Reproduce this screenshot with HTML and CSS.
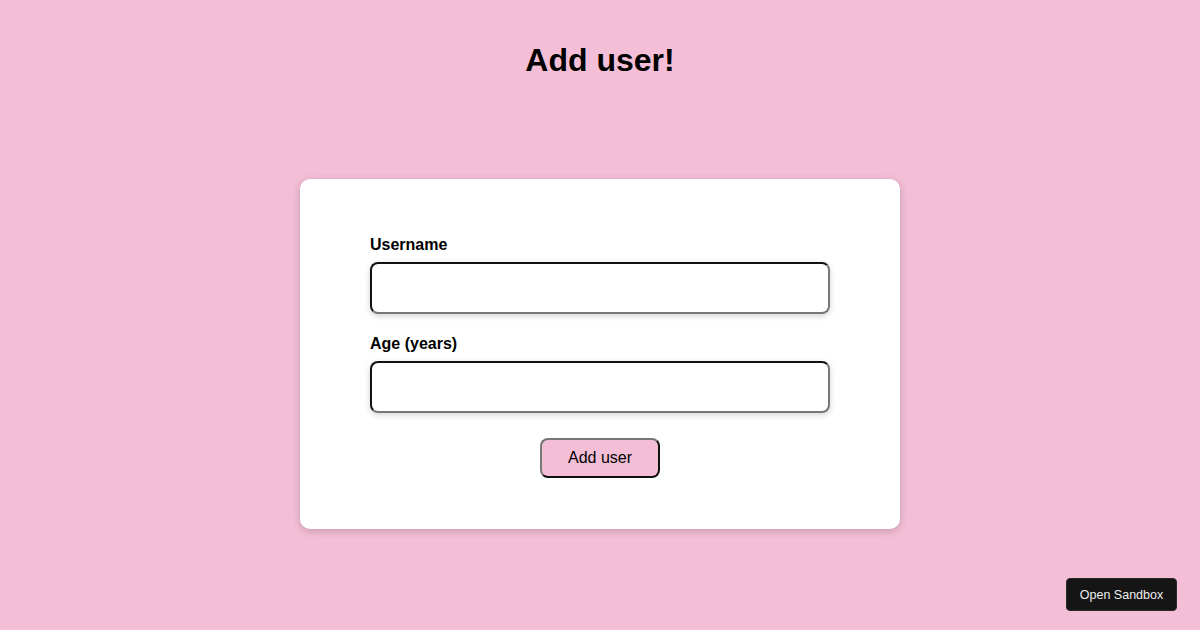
FILE: index.html
```html
<!DOCTYPE html>
<html lang="en">
<head>
<meta charset="utf-8">
<title>Add user</title>
<link rel="stylesheet" href="styles.css">
</head>
<body>
  <h1 class="title">Add user!</h1>
  <main class="card">
    <form class="form">
      <label class="label" for="username">Username</label>
      <input class="input" id="username" type="text">
      <label class="label" for="age">Age (years)</label>
      <input class="input" id="age" type="number">
      <div class="actions">
        <button class="button" type="button">Add user</button>
      </div>
    </form>
  </main>
  <a class="sandbox" href="#">Open Sandbox</a>
</body>
</html>
```

FILE: styles.css
```css
html, body {
  margin: 0;
  padding: 0;
}
body {
  background: #f4bfd6;
  font-family: "Liberation Sans", Arial, sans-serif;
  color: #000;
  min-height: 630px;
  overflow: hidden;
}
.title {
  margin: 0;
  padding-top: 42px;
  text-align: center;
  font-size: 32px;
  font-weight: bold;
  line-height: 37px;
}
.card {
  width: 600px;
  box-sizing: border-box;
  margin: 100px auto 0;
  background: #fff;
  border-radius: 10px;
  box-shadow: 0 2px 8px rgba(0, 0, 0, 0.2);
  padding: 57px 70px 51px;
}
.form {
  display: flex;
  flex-direction: column;
}
.label {
  font-size: 16px;
  font-weight: bold;
  line-height: 18px;
  margin-bottom: 8px;
}
.input {
  height: 52px;
  box-sizing: border-box;
  width: 100%;
  margin: 0 0 21px;
  border-style: solid;
  border-width: 2px;
  border-color: #111 #777 #777 #111;
  border-radius: 8px;
  box-shadow: 0 2px 6px rgba(0, 0, 0, 0.18);
  background: #fff;
  font: inherit;
  padding: 0 10px;
}
.input:last-of-type {
  margin-bottom: 25px;
}
.actions {
  display: flex;
  justify-content: center;
}
.button {
  width: 120px;
  height: 40px;
  box-sizing: border-box;
  background: #f4bfd6;
  border-style: solid;
  border-width: 2px;
  border-color: #777 #111 #111 #777;
  border-radius: 8px;
  font-family: "Liberation Sans", Arial, sans-serif;
  font-size: 16px;
  color: #000;
  padding: 0;
}
.sandbox {
  position: fixed;
  right: 23px;
  bottom: 19px;
  width: 111px;
  height: 33px;
  box-sizing: border-box;
  display: flex;
  align-items: center;
  justify-content: center;
  background: #151515;
  border: 1px solid #2a2a2a;
  border-radius: 4px;
  color: #eee;
  font-size: 12.5px;
  text-decoration: none;
}
```
